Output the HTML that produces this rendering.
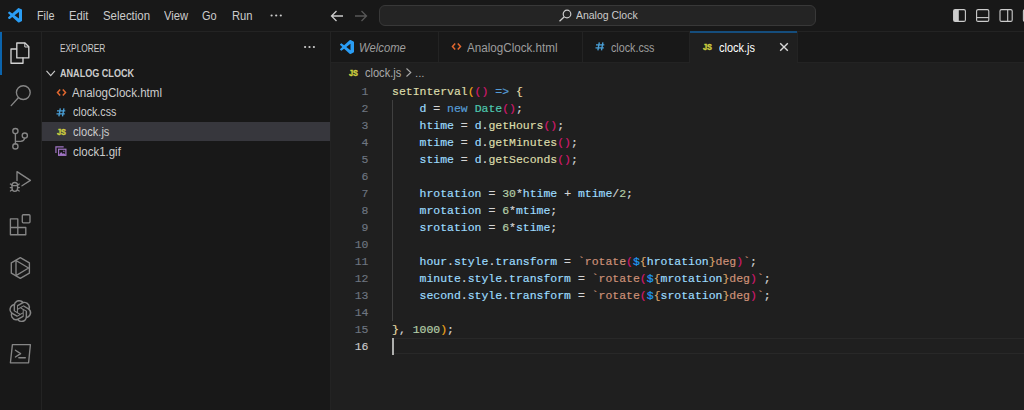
<!DOCTYPE html>
<html><head><meta charset="utf-8">
<style>
*{margin:0;padding:0;box-sizing:border-box}
html,body{width:1024px;height:410px;overflow:hidden;background:#1f1f1f}
body{position:relative;font-family:"Liberation Sans",sans-serif;color:#cccccc}
.a{position:absolute;white-space:pre}
#title{left:0;top:0;width:1024px;height:32px;background:#181818;border-bottom:1px solid #232323}
#act{left:0;top:32px;width:42px;height:378px;background:#181818;border-right:1px solid #232323}
#side{left:42px;top:32px;width:289px;height:378px;background:#181818;border-right:1px solid #232323}
#tabs{left:331px;top:32px;width:693px;height:31px;background:#181818;border-bottom:1px solid #232323}
.menu{font-size:12.2px;color:#cccccc;top:8.7px;line-height:14px;transform-origin:0 0}
.tab{top:32px;height:30px;background:#181818;border-right:1px solid #232323}
.tabt{font-size:12.5px;color:#9d9d9d;top:41.3px;line-height:14px;transform-origin:0 0}
.code{font-family:"Liberation Mono",monospace;font-size:11.47px;line-height:17px;height:17px}
.ln{left:331px;width:37.5px;text-align:right;color:#6e7681;-webkit-text-stroke:0.15px currentColor}
.cl{left:392px;color:#cccccc;-webkit-text-stroke:0.18px currentColor}
.row{font-size:12.5px;line-height:14px;color:#cccccc;transform-origin:0 0}
</style></head><body>
<div class="a" id="title"></div>
<div class="a" id="act"></div>
<div class="a" id="side"></div>
<div class="a" id="tabs"></div>

<!-- title bar -->
<svg class="a" style="left:7.5px;top:8px" width="14.6" height="14.6" viewBox="0 0 24 24">
<path fill="#2a9df4" d="M23.15 2.587L18.21.21a1.494 1.494 0 0 0-1.705.29l-9.46 8.63-4.12-3.128a.999.999 0 0 0-1.276.057L.327 7.261A1 1 0 0 0 .326 8.74L3.899 12 .326 15.26a1 1 0 0 0 .001 1.479L1.65 17.94a.999.999 0 0 0 1.276.057l4.12-3.128 9.46 8.63a1.492 1.492 0 0 0 1.704.29l4.942-2.377A1.5 1.5 0 0 0 24 20.06V3.939a1.5 1.5 0 0 0-.85-1.352zm-5.146 14.861L10.826 12l7.178-5.448v10.896z"/>
</svg>
<div class="a menu" id="t_file" style="left:37.04px;transform:scaleX(0.888)">File</div>
<div class="a menu" id="t_edit" style="left:68.8px;transform:scaleX(0.922)">Edit</div>
<div class="a menu" id="t_sel" style="left:102.96px;transform:scaleX(0.938)">Selection</div>
<div class="a menu" id="t_view" style="left:164.38px;transform:scaleX(0.920)">View</div>
<div class="a menu" id="t_go" style="left:202.4px;transform:scaleX(0.9)">Go</div>
<div class="a menu" id="t_run" style="left:232.01px;transform:scaleX(0.918)">Run</div>
<svg class="a" style="left:266px;top:10px" width="20" height="11" viewBox="0 0 20 11" fill="#cccccc">
<circle cx="5.6" cy="5.5" r="1.1"/><circle cx="10.2" cy="5.5" r="1.1"/><circle cx="14.8" cy="5.5" r="1.1"/>
</svg>

<svg class="a" style="left:330px;top:10px" width="40" height="12" viewBox="0 0 40 12">
<path d="M1.5 6 H13 M6.5 1 L1.5 6 L6.5 11" stroke="#cccccc" stroke-width="1.3" fill="none"/>
<path d="M25 6 H36.5 M31.5 1 L36.5 6 L31.5 11" stroke="#575757" stroke-width="1.3" fill="none"/>
</svg>
<div class="a" style="left:379px;top:5px;width:437px;height:21px;background:#242424;border:1px solid #383838;border-radius:6px"></div>
<svg class="a" style="left:558px;top:9px" width="15" height="13" viewBox="0 0 15 13">
<circle cx="9" cy="5" r="3.8" stroke="#cccccc" stroke-width="1.2" fill="none"/>
<path d="M6.3 7.8 L1.5 12.3" stroke="#cccccc" stroke-width="1.3"/>
</svg>
<div class="a menu" id="t_search" style="left:576.48px;top:8.1px;font-size:11.4px;transform:scaleX(0.918)">Analog Clock</div>


<!-- activity bar -->
<div class="a" style="left:0;top:32px;width:2px;height:42.6px;background:#0b64ad"></div>
<svg class="a" style="left:0;top:32px" width="41" height="378" viewBox="0 32 41 378" fill="none" stroke-linecap="round" stroke-linejoin="round">
<g stroke="#d2d2d2" stroke-width="1.35">
<path d="M16.5 49 H11 V63.2 H23 V58"/>
<path d="M16.8 43 H25 L28.8 46.8 V57.9 H16.8 Z"/>
<path d="M24.8 43.2 V47 H28.6" stroke-width="1"/>
</g>
<g stroke="#868686" stroke-width="1.35">
<circle cx="23.3" cy="92.6" r="6.9"/>
<path d="M11.2 105.6 L18.3 97.8"/>
<circle cx="15.4" cy="131.1" r="2.6"/>
<circle cx="15.4" cy="146.4" r="2.6"/>
<circle cx="24.8" cy="135.6" r="2.6"/>
<path d="M15.4 133.7 V143.8"/>
<path d="M24.6 138.2 Q24.2 141.3 20.5 141.3 H15.6"/>
<path d="M17 180.5 V171.6 L30.4 180.4 L22 185.8"/>
<path d="M12 185.5 Q12 182.5 14.8 182.5 Q17.6 182.5 17.6 185.5 V188 Q17.6 191.3 14.8 191.3 Q12 191.3 12 188 Z"/>
<path d="M12 185.6 H17.6 M10.4 184 L12 185 M19.2 184 L17.6 185 M10.3 187.6 H12 M17.6 187.6 H19.3 M10.4 191 L12 190 M19.2 191 L17.6 190"/>
<path d="M10.4 218.9 H17.8 V227.5 H25.8 V234.7 H10.4 Z M10.4 227.5 H17.8 V234.7"/>
<rect x="22.3" y="214.7" width="7.7" height="8.1" rx="1"/>
<path d="M20.3 257.6 L29.4 262.8 V273.2 L20.3 278.4 L11.3 273.2 V262.8 Z"/>
<path d="M16 260.5 V275.6 L28.6 268 Z"/>
<path d="M12.4 344.6 H30.4 L28.6 362.8 H10.4 Z"/>
<path d="M15.4 350.2 L20.6 353.6 L15.4 357"/>
<path d="M18.8 357.7 H25.3"/>
</g>
<g transform="translate(9.3 300) scale(0.92)">
<path fill="#868686" stroke="none" d="M22.2819 9.8211a5.9847 5.9847 0 0 0-.5157-4.9108 6.0462 6.0462 0 0 0-6.5098-2.9A6.0651 6.0651 0 0 0 4.9807 4.1818a5.9847 5.9847 0 0 0-3.9977 2.9 6.0462 6.0462 0 0 0 .7427 7.0966 5.98 5.98 0 0 0 .511 4.9107 6.051 6.051 0 0 0 6.5146 2.9001A5.9847 5.9847 0 0 0 13.2599 24a6.0557 6.0557 0 0 0 5.7718-4.2058 5.9894 5.9894 0 0 0 3.9977-2.9001 6.0557 6.0557 0 0 0-.7475-7.0729zm-9.022 12.6081a4.4755 4.4755 0 0 1-2.8764-1.0408l.1419-.0804 4.7783-2.7582a.7948.7948 0 0 0 .3927-.6813v-6.7369l2.02 1.1686a.071.071 0 0 1 .038.052v5.5826a4.504 4.504 0 0 1-4.4945 4.4944zm-9.6607-4.1254a4.4708 4.4708 0 0 1-.5346-3.0137l.142.0852 4.783 2.7582a.7712.7712 0 0 0 .7806 0l5.8428-3.3685v2.3324a.0804.0804 0 0 1-.0332.0615L9.74 19.9502a4.4992 4.4992 0 0 1-6.1408-1.6464zM2.3408 7.8956a4.485 4.485 0 0 1 2.3655-1.9728V11.6a.7664.7664 0 0 0 .3879.6765l5.8144 3.3543-2.0201 1.1685a.0757.0757 0 0 1-.071 0l-4.8303-2.7865A4.504 4.504 0 0 1 2.3408 7.872zm16.5963 3.8558L13.1038 8.364 15.1192 7.2a.0757.0757 0 0 1 .071 0l4.8303 2.7913a4.4944 4.4944 0 0 1-.6765 8.1042v-5.6772a.79.79 0 0 0-.407-.667zm2.0107-3.0231l-.142-.0852-4.7735-2.7818a.7759.7759 0 0 0-.7854 0L9.409 9.2297V6.8974a.0662.0662 0 0 1 .0284-.0615l4.8303-2.7866a4.4992 4.4992 0 0 1 6.6802 4.66zM8.3065 12.863l-2.02-1.1638a.0804.0804 0 0 1-.038-.0567V6.0742a4.4992 4.4992 0 0 1 7.3757-3.4537l-.142.0805L8.704 5.459a.7948.7948 0 0 0-.3927.6813zm1.0976-2.3654l2.602-1.4998 2.6069 1.4998v2.9994l-2.5974 1.4997-2.6067-1.4997Z"/>
</g>
</svg>

<!-- layout icons -->
<svg class="a" style="left:950px;top:6px" width="74" height="20" viewBox="950 6 74 20" fill="none" stroke="#cccccc" stroke-width="1.1">
<rect x="953.6" y="9.6" width="11.8" height="11.8" rx="1.5"/>
<rect x="954" y="10" width="4.8" height="11" fill="#cccccc" stroke="none"/>
<rect x="976.6" y="9.6" width="12.2" height="11.8" rx="1.5"/>
<path d="M976.6 17.6 H988.8"/>
<rect x="1000" y="9.6" width="12.2" height="11.8" rx="1.5"/>
<path d="M1007.7 9.6 V21.4"/>
<rect x="1023.4" y="9.6" width="12" height="11.8" rx="1.5"/>
</svg>

<!-- sidebar -->
<div class="a" style="left:59.7px;top:41.8px;font-size:10px;line-height:14px;color:#cccccc;transform:scaleX(0.832);transform-origin:0 0">EXPLORER</div>
<svg class="a" style="left:300px;top:42px" width="24" height="10" viewBox="0 0 24 10" fill="#cccccc">
<circle cx="5.1" cy="5" r="1.1"/><circle cx="9.5" cy="5" r="1.1"/><circle cx="13.9" cy="5" r="1.1"/>
</svg>
<svg class="a" style="left:44px;top:66px" width="14" height="14" viewBox="0 0 14 14" fill="none" stroke="#cccccc" stroke-width="1.1">
<path d="M2.5 4.8 L6.7 9.6 L10.9 4.8"/>
</svg>
<div class="a" style="left:60.2px;top:66.9px;font-size:10px;line-height:14px;font-weight:bold;color:#cccccc;transform:scaleX(0.907);transform-origin:0 0">ANALOG CLOCK</div>
<div class="a" style="left:42px;top:122px;width:288px;height:19.2px;background:#37373d"></div>
<svg class="a" style="left:56px;top:86.6px" width="11" height="11" viewBox="0 0 11 11" fill="none" stroke="#e2682f" stroke-width="1.5">
<path d="M4.2 2.6 L1.5 5.5 L4.2 8.4 M6.8 2.6 L9.5 5.5 L6.8 8.4"/>
</svg>
<div class="a row" id="r_html" style="left:72.48px;top:86.0px;transform:scaleX(0.925)">AnalogClock.html</div>
<svg class="a" style="left:56px;top:107.6px" width="10" height="9" viewBox="0 0 10 9" fill="none" stroke="#4a9fd6" stroke-width="1.35">
<path d="M4.3 0.3 L2.9 8.4 M7.9 0.3 L6.5 8.4 M1.0 2.9 H9.3 M0.5 5.9 H8.8"/>
</svg>
<div class="a row" id="r_css" style="left:73.03px;top:105.3px;transform:scaleX(0.855)">clock.css</div>
<div class="a" style="left:56.7px;top:125.8px;font-size:8.4px;line-height:12px;font-weight:bold;color:#cbcb41;-webkit-text-stroke:0.45px #cfcf3e;transform:scaleX(0.88);transform-origin:0 0">JS</div>
<div class="a row" id="r_js" style="left:72.64px;top:125.0px;transform:scaleX(0.889)">clock.js</div>
<svg class="a" style="left:55.1px;top:146.4px" width="12" height="10.15" viewBox="0 0 13 11" fill="none" stroke="#a074c4" stroke-width="1.3">
<path d="M1 7.6 V1 H9.4"/>
<rect x="3.9" y="3.5" width="7.9" height="6.6"/>
<path d="M4.2 10 L6.6 6.6 L8.6 8.6 L9.6 7.6 L11.6 10 Z" fill="#a074c4" stroke="none"/>
<circle cx="9.6" cy="5.6" r="0.8" fill="#a074c4" stroke="none"/>
</svg>
<div class="a row" id="r_gif" style="left:73.02px;top:144.7px;transform:scaleX(0.918)">clock1.gif</div>

<!-- tabs -->
<div class="a tab" style="left:331px;width:108px"></div>
<div class="a tab" style="left:439px;width:144px"></div>
<div class="a tab" style="left:583px;width:107px"></div>
<div class="a tab" style="left:690px;width:108px;height:31px;background:#1f1f1f"></div>
<div class="a" style="left:690px;top:31px;width:107px;height:2px;background:#154d7c"></div>
<svg class="a" style="left:339.8px;top:39.8px" width="14" height="14" viewBox="0 0 24 24">
<path fill="#2a9df4" d="M23.15 2.587L18.21.21a1.494 1.494 0 0 0-1.705.29l-9.46 8.63-4.12-3.128a.999.999 0 0 0-1.276.057L.327 7.261A1 1 0 0 0 .326 8.74L3.899 12 .326 15.26a1 1 0 0 0 .001 1.479L1.65 17.94a.999.999 0 0 0 1.276.057l4.12-3.128 9.46 8.63a1.492 1.492 0 0 0 1.704.29l4.942-2.377A1.5 1.5 0 0 0 24 20.06V3.939a1.5 1.5 0 0 0-.85-1.352zm-5.146 14.861L10.826 12l7.178-5.448v10.896z"/>
</svg>
<div class="a tabt" id="tb_w" style="left:359.07px;font-style:italic;transform:scaleX(0.903)">Welcome</div>
<svg class="a" style="left:450.8px;top:41.3px" width="11" height="11" viewBox="0 0 11 11" fill="none" stroke="#e2682f" stroke-width="1.5">
<path d="M4.2 2.6 L1.5 5.5 L4.2 8.4 M6.8 2.6 L9.5 5.5 L6.8 8.4"/>
</svg>
<div class="a tabt" id="tb_html" style="left:467.00px;transform:scaleX(0.931)">AnalogClock.html</div>
<svg class="a" style="left:595.2px;top:42.4px" width="10" height="9" viewBox="0 0 10 9" fill="none" stroke="#4a9fd6" stroke-width="1.35">
<path d="M4.3 0.3 L2.9 8.4 M7.9 0.3 L6.5 8.4 M1.0 2.9 H9.3 M0.5 5.9 H8.8"/>
</svg>
<div class="a tabt" id="tb_css" style="left:611.37px;transform:scaleX(0.857)">clock.css</div>
<div class="a" style="left:703px;top:41px;font-size:8.4px;line-height:12px;font-weight:bold;color:#cbcb41;-webkit-text-stroke:0.45px #cfcf3e;transform:scaleX(0.88);transform-origin:0 0">JS</div>
<div class="a tabt" id="tb_js" style="left:719.00px;color:#ffffff;transform:scaleX(0.878)">clock.js</div>
<svg class="a" style="left:778px;top:41px" width="12" height="12" viewBox="0 0 12 12" stroke="#d8d8d8" stroke-width="1.4">
<path d="M2.2 2.2 L9.8 9.8 M9.8 2.2 L2.2 9.8"/>
</svg>

<!-- breadcrumb -->
<div class="a" style="left:349px;top:67px;font-size:8.4px;line-height:12px;font-weight:bold;color:#cbcb41;-webkit-text-stroke:0.45px #cfcf3e;transform:scaleX(0.88);transform-origin:0 0">JS</div>
<div class="a" id="bc_js" style="left:365.24px;top:66.2px;font-size:12.3px;line-height:14px;color:#a9a9a9;transform-origin:0 0;transform:scaleX(0.898)">clock.js</div>
<svg class="a" style="left:404px;top:67px" width="10" height="11" viewBox="0 0 10 11" fill="none" stroke="#a9a9a9" stroke-width="1.1">
<path d="M2.5 1.5 L6.8 5.5 L2.5 9.5"/>
</svg>
<div class="a" style="left:415px;top:65.5px;font-size:11.4px;line-height:14px;color:#a9a9a9">...</div>

<!-- code -->
<style>
.f{color:#dcdcaa}.v{color:#9cdcfe}.k{color:#569cd6}.c{color:#4ec9b0}.n{color:#b5cea8}.s{color:#ce9178}
.o{color:#d4d4d4}.b1{color:#f0a81c}.b2{color:#d3196e}.b0{color:#e6dca6}.d{color:#1f9cf8}.b3{color:#d9a468}
</style>
<div class="a" style="left:392px;top:100px;width:1px;height:221px;background:#404040"></div>
<div class="a" style="left:392px;top:338px;width:632px;height:16px;border-top:1px solid #282828;border-bottom:1px solid #282828"></div>
<div class="a" style="left:392px;top:338px;width:2px;height:17px;background:#aeafad"></div>
<div class="a code ln" style="top:83px">1</div>
<div class="a code cl" style="top:83px"><span class="f">setInterval</span><span class="b1">(</span><span class="b2">()</span> <span class="k">=&gt;</span> <span class="b0">{</span></div>
<div class="a code ln" style="top:100px">2</div>
<div class="a code cl" style="top:100px">    <span class="v">d</span> <span class="o">=</span> <span class="k">new</span> <span class="c">Date</span><span class="b2">()</span><span class="o">;</span></div>
<div class="a code ln" style="top:117px">3</div>
<div class="a code cl" style="top:117px">    <span class="v">htime</span> <span class="o">=</span> <span class="v">d</span><span class="o">.</span><span class="f">getHours</span><span class="b2">()</span><span class="o">;</span></div>
<div class="a code ln" style="top:134px">4</div>
<div class="a code cl" style="top:134px">    <span class="v">mtime</span> <span class="o">=</span> <span class="v">d</span><span class="o">.</span><span class="f">getMinutes</span><span class="b2">()</span><span class="o">;</span></div>
<div class="a code ln" style="top:151px">5</div>
<div class="a code cl" style="top:151px">    <span class="v">stime</span> <span class="o">=</span> <span class="v">d</span><span class="o">.</span><span class="f">getSeconds</span><span class="b2">()</span><span class="o">;</span></div>
<div class="a code ln" style="top:168px">6</div>
<div class="a code ln" style="top:185px">7</div>
<div class="a code cl" style="top:185px">    <span class="v">hrotation</span> <span class="o">=</span> <span class="n">30</span><span class="o">*</span><span class="v">htime</span> <span class="o">+</span> <span class="v">mtime</span><span class="o">/</span><span class="n">2</span><span class="o">;</span></div>
<div class="a code ln" style="top:202px">8</div>
<div class="a code cl" style="top:202px">    <span class="v">mrotation</span> <span class="o">=</span> <span class="n">6</span><span class="o">*</span><span class="v">mtime</span><span class="o">;</span></div>
<div class="a code ln" style="top:219px">9</div>
<div class="a code cl" style="top:219px">    <span class="v">srotation</span> <span class="o">=</span> <span class="n">6</span><span class="o">*</span><span class="v">stime</span><span class="o">;</span></div>
<div class="a code ln" style="top:236px">10</div>
<div class="a code ln" style="top:253px">11</div>
<div class="a code cl" style="top:253px">    <span class="v">hour</span><span class="o">.</span><span class="v">style</span><span class="o">.</span><span class="v">transform</span> <span class="o">=</span> <span class="s">`rotate</span><span class="b2">(</span><span class="d">$</span><span class="b3">{</span><span class="v">hrotation</span><span class="b3">}</span><span class="s">deg</span><span class="b2">)</span><span class="s">`</span><span class="o">;</span></div>
<div class="a code ln" style="top:270px">12</div>
<div class="a code cl" style="top:270px">    <span class="v">minute</span><span class="o">.</span><span class="v">style</span><span class="o">.</span><span class="v">transform</span> <span class="o">=</span> <span class="s">`rotate</span><span class="b2">(</span><span class="d">$</span><span class="b3">{</span><span class="v">mrotation</span><span class="b3">}</span><span class="s">deg</span><span class="b2">)</span><span class="s">`</span><span class="o">;</span></div>
<div class="a code ln" style="top:287px">13</div>
<div class="a code cl" style="top:287px">    <span class="v">second</span><span class="o">.</span><span class="v">style</span><span class="o">.</span><span class="v">transform</span> <span class="o">=</span> <span class="s">`rotate</span><span class="b2">(</span><span class="d">$</span><span class="b3">{</span><span class="v">srotation</span><span class="b3">}</span><span class="s">deg</span><span class="b2">)</span><span class="s">`</span><span class="o">;</span></div>
<div class="a code ln" style="top:304px">14</div>
<div class="a code ln" style="top:321px">15</div>
<div class="a code cl" style="top:321px"><span class="b0">}</span><span class="o">,</span> <span class="n">1000</span><span class="b1">)</span><span class="o">;</span></div>
<div class="a code ln" style="top:338px;color:#cccccc">16</div>
</body></html>
